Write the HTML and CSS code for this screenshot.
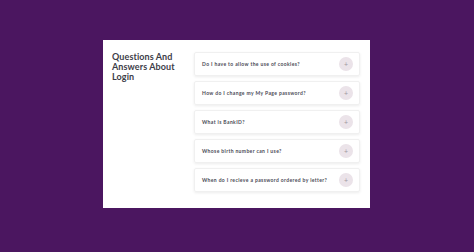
FILE: index.html
```html
<!DOCTYPE html>
<html lang="en">
<head>
    <meta charset="UTF-8">
    <meta name="viewport" content="width=device-width, initial-scale=1.0">
    <title>Questions And Answers About Login</title>
    <link rel="stylesheet" href="styles.css">
</head>
<body>

    <div class="faq-card">
        <h2 class="faq-title">Questions And Answers About Login</h2>

        <div class="faq-list">
            <div class="faq-item">
                <span class="faq-question">Do I have to allow the use of cookies?</span>
                <span class="faq-toggle">+</span>
            </div>
            <div class="faq-item">
                <span class="faq-question">How do I change my My Page password?</span>
                <span class="faq-toggle">+</span>
            </div>
            <div class="faq-item">
                <span class="faq-question">What is BankID?</span>
                <span class="faq-toggle">+</span>
            </div>
            <div class="faq-item">
                <span class="faq-question">Whose birth number can I use?</span>
                <span class="faq-toggle">+</span>
            </div>
            <div class="faq-item">
                <span class="faq-question">When do I recieve a password ordered by letter?</span>
                <span class="faq-toggle">+</span>
            </div>
        </div>
    </div>

</body>
</html>
```

FILE: styles.css
```css
body {
    font-family: Lato, "Open Sans", sans-serif;
    background-color: #4b1660;
    margin: 0;
    height: 252px;
    display: flex;
    justify-content: center;
    align-items: flex-start;
    padding-top: 40px;
    box-sizing: border-box;
}
.faq-card {
    background-color: white;
    width: 267px;
    height: 168px;
    box-sizing: border-box;
    padding: 12px 10px 0 9px;
    display: flex;
    margin-left: -1px;
}
.faq-title {
    width: 82px;
    margin: 0;
    font-size: 9px;
    line-height: 10px;
    font-weight: 700;
    color: #3d3d48;
    letter-spacing: 0.1px;
    padding-right: 8px;
    box-sizing: border-box;
}
.faq-list {
    flex: 1;
    display: flex;
    flex-direction: column;
    gap: 5px;
}
.faq-item {
    height: 24px;
    box-sizing: border-box;
    display: flex;
    align-items: center;
    justify-content: space-between;
    padding: 0 6px 0 7px;
    border: 1px solid #f0f0f0;
    border-radius: 2px;
    box-shadow: 0 1px 3px rgba(0, 0, 0, 0.08);
}
.faq-question {
    font-size: 5px;
    font-weight: 700;
    letter-spacing: 0.38px;
    color: #4a4a55;
}
.faq-toggle {
    width: 14px;
    height: 14px;
    border-radius: 50%;
    background-color: #ebe3e9;
    color: #a09aa0;
    font-size: 7px;
    line-height: 14px;
    text-align: center;
}
```
